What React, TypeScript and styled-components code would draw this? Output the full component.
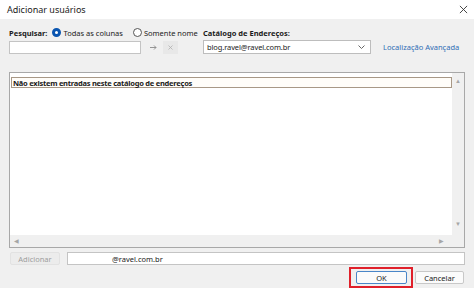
import styled, { createGlobalStyle } from 'styled-components';

const GlobalStyle = createGlobalStyle`
  html, body {
    margin: 0;
    padding: 0;
    background: #ffffff;
  }
  body {
    font-family: "Noto Sans", "Open Sans", sans-serif;
    font-size: 7.5px;
    color: #1a1a1a;
  }
`;

const Dialog = styled.div`
  width: 474px;
  height: 291px;
  display: flex;
  flex-direction: column;
  overflow: hidden;
`;

const TitleBar = styled.div`
  height: 22px;
  display: flex;
  align-items: center;
  justify-content: space-between;
  padding: 0 6px 0 7px;
  background: #ffffff;
  font-size: 9px;
  color: #1a1a1a;
`;

const CloseIcon = styled.svg`
  width: 9px;
  height: 9px;
`;

const Body = styled.div`
  flex: 1;
  background: #f0f0f0;
  padding: 7px 9px 0 9px;
  display: flex;
  flex-direction: column;
  margin-bottom: 3px;
`;

const SearchGrid = styled.div`
  display: grid;
  grid-template-columns: 194px 168px auto;
  grid-template-rows: 13px 14px;
  row-gap: 1px;
  align-items: center;
`;

const RadioRow = styled.div`
  display: flex;
  align-items: center;
  gap: 2px;
  white-space: nowrap;
`;

const Label = styled.span`
  font-weight: 700;
  white-space: nowrap;
`;

const Radio = styled.span<{ $checked?: boolean }>`
  width: 9px;
  height: 9px;
  border-radius: 50%;
  box-sizing: border-box;
  border: ${(p) => (p.$checked ? '3px solid #0a55b0' : '1px solid #555')};
  background: #ffffff;
  margin-left: ${(p) => (p.$checked ? '3px' : '8px')};
  flex: none;
`;

const ControlRow = styled.div`
  display: flex;
  align-items: center;
  height: 14px;
`;

const TextInput = styled.div<{ $width?: number; $indent?: number }>`
  width: ${(p) => (p.$width ? `${p.$width}px` : 'auto')};
  flex: ${(p) => (p.$width ? 'none' : '1')};
  height: 13px;
  box-sizing: border-box;
  background: #ffffff;
  border: 1px solid #c4c4c4;
  display: flex;
  align-items: center;
  white-space: nowrap;
  padding-left: ${(p) => p.$indent ?? 0}px;
`;

const IconButton = styled.span<{ $shaded?: boolean }>`
  width: 15px;
  height: 13px;
  display: flex;
  align-items: center;
  justify-content: center;
  background: ${(p) => (p.$shaded ? '#e8e8e8' : 'transparent')};
  margin-left: ${(p) => (p.$shaded ? '2px' : '5px')};
`;

const Select = styled.div`
  height: 14px;
  box-sizing: border-box;
  background: #ffffff;
  border: 1px solid #bdbdbd;
  display: flex;
  align-items: center;
  justify-content: space-between;
  padding: 0 5px 0 3px;
  letter-spacing: -0.1px;
`;

const Link = styled.span`
  color: #2f6db5;
  margin-left: 12px;
  white-space: nowrap;
`;

const ListBox = styled.div`
  margin-top: 18px;
  height: 176px;
  box-sizing: border-box;
  border: 1px solid #a8a8a8;
  background: #ffffff;
  display: grid;
  grid-template-columns: 1fr 12px;
  grid-template-rows: 1fr 12px;
`;

const ListContent = styled.div`
  padding: 4px 0 0 1px;
`;

const EmptyRow = styled.div`
  height: 11px;
  box-sizing: border-box;
  border: 1px solid #a89886;
  background: #fffdf9;
  font-weight: 700;
  letter-spacing: -0.25px;
  display: flex;
  align-items: center;
  padding-left: 1px;
  white-space: nowrap;
`;

const ScrollBar = styled.div<{ $vertical?: boolean }>`
  background: #f0f0f0;
  display: flex;
  flex-direction: ${(p) => (p.$vertical ? 'column' : 'row')};
  align-items: center;
  justify-content: space-between;
  padding: ${(p) => (p.$vertical ? '4px 0 7px' : '0 8px 0 4px')};
  color: #a6a6a6;
  font-size: 6px;
`;

const Corner = styled.div`
  background: #f0f0f0;
`;

const AddRow = styled.div`
  display: flex;
  align-items: center;
  gap: 7px;
  margin-top: 4px;
  padding-left: 1px;
  height: 13px;
`;

const Button = styled.span<{ $disabled?: boolean; $primary?: boolean; $width: number }>`
  width: ${(p) => p.$width}px;
  height: 13px;
  box-sizing: border-box;
  display: flex;
  align-items: center;
  justify-content: center;
  background: ${(p) => (p.$disabled ? '#ececec' : '#fbfbfb')};
  border: 1px solid ${(p) => (p.$disabled ? '#e2e2e2' : p.$primary ? '#4a86c8' : '#c8c8c8')};
  border-radius: 2px;
  color: ${(p) => (p.$disabled ? '#9d9d9d' : '#1a1a1a')};
`;

const FooterRow = styled.div`
  display: flex;
  justify-content: flex-end;
  align-items: center;
  gap: 2px;
  margin-top: 2px;
  padding-right: 1px;
`;

const Highlight = styled.span`
  border: 2px solid #e0202a;
  padding: 2px 4px 2px 5px;
`;

export default function App() {
  return (
    <Dialog>
      <GlobalStyle />
      <TitleBar>
        <span>Adicionar usuários</span>
        <CloseIcon viewBox="0 0 10 10">
          <path d="M1 1 L9 9 M9 1 L1 9" stroke="#333" strokeWidth="1" fill="none" />
        </CloseIcon>
      </TitleBar>
      <Body>
        <SearchGrid>
          <RadioRow>
            <Label>Pesquisar:</Label>
            <Radio $checked />
            <span>Todas as colunas</span>
            <Radio />
            <span>Somente nome</span>
          </RadioRow>
          <Label>Catálogo de Endereços:</Label>
          <span />
          <ControlRow>
            <TextInput $width={132} />
            <IconButton>
              <svg width="7" height="5" viewBox="0 0 7 5">
                <path d="M0 2.5 H6 M4 0.5 L6 2.5 L4 4.5" stroke="#8a8a8a" fill="none" strokeWidth="0.9" />
              </svg>
            </IconButton>
            <IconButton $shaded>
              <svg width="5" height="5" viewBox="0 0 5 5">
                <path d="M0.5 0.5 L4.5 4.5 M4.5 0.5 L0.5 4.5" stroke="#b0b0b0" fill="none" strokeWidth="0.8" />
              </svg>
            </IconButton>
          </ControlRow>
          <Select>
            <span>blog.ravel@ravel.com.br</span>
            <svg width="7" height="4" viewBox="0 0 7 4">
              <path d="M0.5 0.5 L3.5 3.5 L6.5 0.5" stroke="#666" fill="none" />
            </svg>
          </Select>
          <Link>Localização Avançada</Link>
        </SearchGrid>
        <ListBox>
          <ListContent>
            <EmptyRow>Não existem entradas neste catálogo de endereços</EmptyRow>
          </ListContent>
          <ScrollBar $vertical>
            <span>▲</span>
            <span>▼</span>
          </ScrollBar>
          <ScrollBar>
            <span>◀</span>
            <span>▶</span>
          </ScrollBar>
          <Corner />
        </ListBox>
        <AddRow>
          <Button $disabled $width={50}>Adicionar</Button>
          <TextInput $indent={44}>@ravel.com.br</TextInput>
        </AddRow>
        <FooterRow>
          <Highlight>
            <Button $primary $width={51}>OK</Button>
          </Highlight>
          <Button $width={49}>Cancelar</Button>
        </FooterRow>
      </Body>
    </Dialog>
  );
}
